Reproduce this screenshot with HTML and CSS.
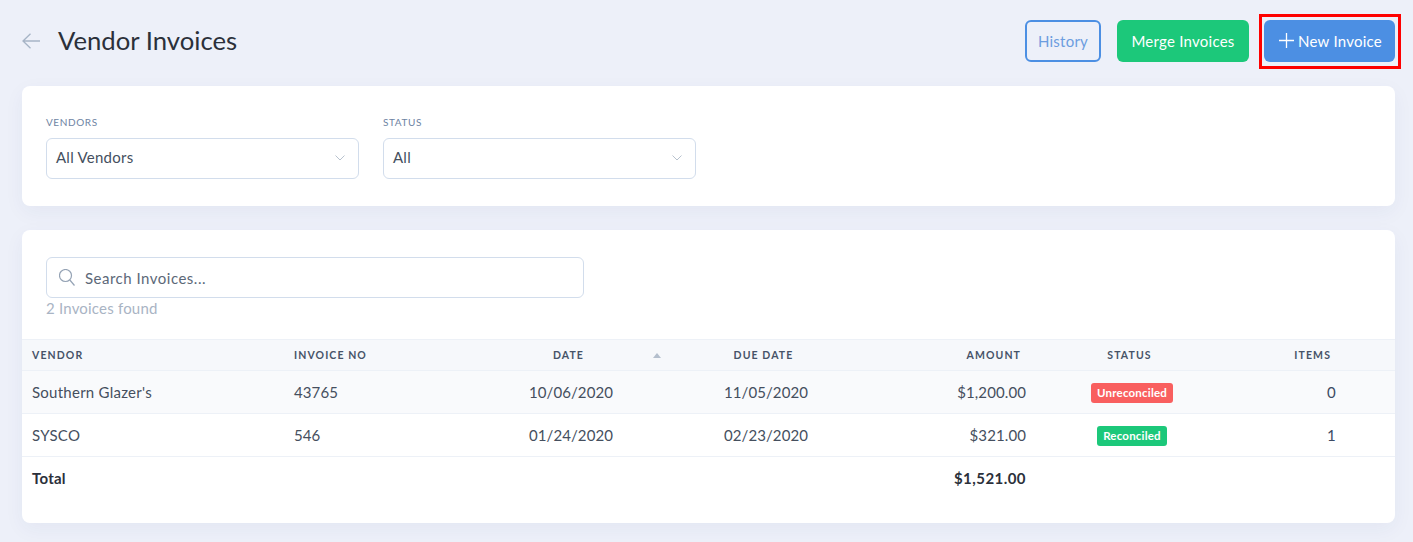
FILE: index.html
```html
<!DOCTYPE html>
<html lang="en">
<head>
  <meta charset="UTF-8">
  <title>Vendor Invoices</title>
  <link rel="stylesheet" href="styles.css">
</head>
<body>
  <header class="page_head">
    <svg class="back_icon" width="18" height="16" viewBox="0 0 18 16"><path d="M18 8H1M8.500 .8 1 8l7.500 7.200"/></svg>
    <h1>Vendor Invoices</h1>
    <div class="head_actions">
      <a class="btn btn_outline">History</a>
      <a class="btn btn_green">Merge Invoices</a>
      <a class="btn btn_blue marked">
        <svg class="plus_icon" width="15" height="15" viewBox="0 0 15 15"><path d="M7.500 0v15M0 7.500h15"/></svg>
        New Invoice
      </a>
    </div>
  </header>

  <section class="card filters">
    <div class="field">
      <label>Vendors</label>
      <div class="select">All Vendors
        <svg width="10" height="6" viewBox="0 0 10 6"><path d="M.5.5 5 5 9.500.5"/></svg>
      </div>
    </div>
    <div class="field">
      <label>Status</label>
      <div class="select">All
        <svg width="10" height="6" viewBox="0 0 10 6"><path d="M.5.5 5 5 9.500.5"/></svg>
      </div>
    </div>
  </section>

  <section class="card list">
    <div class="search_wrap">
      <div class="search">
        <svg width="16" height="17" viewBox="0 0 16 17"><circle cx="6.500" cy="6.500" r="6"/><path d="M10.800 11 15.500 16.500"/></svg>
        Search Invoices...
      </div>
      <p class="found">2 Invoices found</p>
    </div>

    <table>
      <colgroup>
        <col class="col_vendor"><col class="col_invoice"><col class="col_date"><col class="col_due">
        <col class="col_amount"><col class="col_status"><col class="col_items"><col>
      </colgroup>
      <thead>
        <tr>
          <th>Vendor</th>
          <th>Invoice No</th>
          <th class="center sorted">Date</th>
          <th class="center">Due Date</th>
          <th class="right">Amount</th>
          <th class="center">Status</th>
          <th class="right">Items</th>
          <th></th>
        </tr>
      </thead>
      <tbody>
        <tr class="striped">
          <td>Southern Glazer's</td>
          <td class="num">43765</td>
          <td class="center num">10/06/2020</td>
          <td class="center num">11/05/2020</td>
          <td class="right num">$1,200.00</td>
          <td class="center"><span class="badge badge_red">Unreconciled</span></td>
          <td class="right link">0</td>
          <td></td>
        </tr>
        <tr>
          <td>SYSCO</td>
          <td class="num">546</td>
          <td class="center num">01/24/2020</td>
          <td class="center num">02/23/2020</td>
          <td class="right num">$321.00</td>
          <td class="center"><span class="badge badge_green">Reconciled</span></td>
          <td class="right link">1</td>
          <td></td>
        </tr>
      </tbody>
      <tfoot>
        <tr>
          <td>Total</td>
          <td></td>
          <td></td>
          <td></td>
          <td class="right grand">$1,521.00</td>
          <td></td>
          <td></td>
          <td></td>
        </tr>
      </tfoot>
    </table>
  </section>
</body>
</html>
```

FILE: styles.css
```css
*{
    box-sizing: border-box;
}

body{
    margin: 0;
    padding: 20px 18px 0 22px;
    background: #edf0f9;
    color: #2d3440;
    font-family: "Lato", "Liberation Sans", sans-serif;
    font-size: 15px;
    letter-spacing: .25px;
}

.page_head{
    display: flex;
    align-items: center;
    height: 42px;
    margin-bottom: 24px;
}

.back_icon path{
    fill: none;
    stroke: #a6b4c6;
    stroke-width: 1.3;
}

h1{
    margin: 0 0 2px 18px;
    font-size: 25.700px;
    font-weight: 400;
    letter-spacing: 0;
    color: #2b303a;
}

.head_actions{
    display: flex;
    gap: 16px;
    margin-left: auto;
}

.btn{
    display: flex;
    align-items: center;
    height: 42px;
    padding: 0 14px 1px;
    border-radius: 6px;
    white-space: nowrap;
    color: #fff;
}

.btn_outline{
    width: 76px;
    justify-content: center;
    border: 2px solid #4c8fe3;
    padding: 0 0 1px;
    color: #6c9de0;
}

.btn_green{
    width: 132px;
    justify-content: center;
    background: #1cc87a;
}

.btn_blue{
    width: 131px;
    padding-left: 15px;
    margin-left: -1px;
    background: #4c8fe3;
    gap: 4px;
}

.marked{
    position: relative;
}

.marked::after{
    content: '';
    position: absolute;
    top: -6px;
    bottom: -7px;
    left: -5px;
    right: -6px;
    border: 3px solid #fe0000;
}

.plus_icon{
    flex-shrink: 0;
}

.plus_icon path{
    stroke: #fff;
    stroke-width: 1.3;
}

.card{
    background: #fff;
    border-radius: 8px;
    box-shadow: 0 6px 20px rgba(40, 60, 110, .05);
    margin-bottom: 24px;
}

.filters{
    display: flex;
    gap: 24px;
    height: 120px;
    padding: 30px 24px 0;
}

.field{
    width: 313px;
}

.field label{
    display: block;
    margin-bottom: 9px;
    font-size: 10px;
    line-height: 13px;
    letter-spacing: .6px;
    text-transform: uppercase;
    color: #6e84a3;
}

.select{
    display: flex;
    align-items: center;
    justify-content: space-between;
    height: 41px;
    padding: 0 13px 3px 9px;
    border: 1px solid #d2ddec;
    border-radius: 6px;
    color: #454f5e;
}

.select svg{
    margin-top: 2px;
}

.select svg path{
    fill: none;
    stroke: #a6b2c2;
    stroke-width: .8;
}

.list{
    height: 293px;
}

.search_wrap{
    height: 109px;
    padding: 27px 24px 0;
}

.search{
    display: flex;
    align-items: center;
    gap: 10px;
    width: 538px;
    height: 41px;
    padding-left: 12px;
    border: 1px solid #d2ddec;
    border-radius: 6px;
    letter-spacing: .5px;
    color: #5c6878;
}

.search svg circle,
.search svg path{
    fill: none;
    stroke: #95a3b5;
    stroke-width: 1.2;
}

.found{
    margin: 0;
    line-height: 20px;
    letter-spacing: .2px;
    color: #a9b4c4;
}

table{
    width: 100%;
    border-collapse: collapse;
    table-layout: fixed;
}

.col_vendor{ width: 262px; }
.col_invoice{ width: 187px; }
.col_date{ width: 200px; }
.col_due{ width: 190px; }
.col_amount{ width: 175px; }
.col_status{ width: 192px; }
.col_items{ width: 118px; }

th{
    height: 31px;
    padding: 0 15px 1px 10px;
    background: #f6f8fb;
    border-top: 1px solid #edf1f7;
    border-bottom: 1px solid #edf1f7;
    font-size: 10.500px;
    font-weight: 700;
    letter-spacing: 1.100px;
    text-align: left;
    text-transform: uppercase;
    color: #465368;
}

td{
    height: 43px;
    padding: 0 10px 1px;
    border-bottom: 1px solid #edf1f7;
    color: #454f5e;
}

td.num{
    letter-spacing: .1px;
}

.striped td{
    background: #f9fafc;
}

th.center,
td.center{
    text-align: center;
}

th.right,
td.right{
    text-align: right;
}

td.link{
    color: #3c4a63;
}

.sorted{
    position: relative;
}

.sorted::after{
    content: '';
    position: absolute;
    right: 10px;
    top: 13px;
    border-left: 4px solid transparent;
    border-right: 4px solid transparent;
    border-bottom: 5px solid #b4bfcd;
}

tfoot td{
    border-bottom: 0;
    font-weight: 700;
    color: #2b303a;
}

tfoot td.grand{
    letter-spacing: .45px;
}

.badge{
    display: inline-block;
    margin-top: 2px;
    padding: 0 6px;
    border-radius: 3px;
    font-size: 11.500px;
    font-weight: 700;
    letter-spacing: .2px;
    line-height: 20px;
    vertical-align: middle;
    color: #fff;
}

.badge_red{
    background: #f95f5f;
}

.badge_green{
    background: #1cc87a;
}
```
